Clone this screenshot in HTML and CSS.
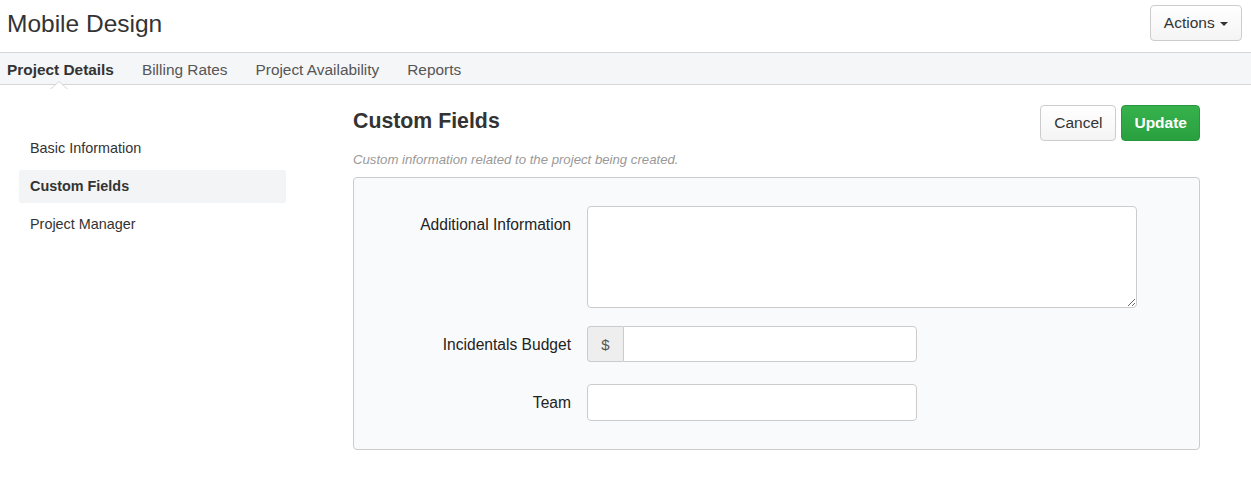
FILE: index.html
```html
<!DOCTYPE html>
<html lang="en">
<head>
    <meta charset="UTF-8">
    <meta name="viewport" content="width=device-width, initial-scale=1.0">
    <title>Mobile Design</title>
    <link rel="stylesheet" href="styles.css">
</head>
<body>
    <header class="page-header">
        <h1>Mobile Design</h1>
        <button class="btn btn-actions">Actions <span class="caret"></span></button>
    </header>

    <nav class="tabs">
        <a class="tab active" href="#">Project Details</a>
        <a class="tab" href="#">Billing Rates</a>
        <a class="tab" href="#">Project Availability</a>
        <a class="tab" href="#">Reports</a>
    </nav>

    <div class="content">
        <ul class="side-nav">
            <li><a href="#">Basic Information</a></li>
            <li class="active"><a href="#">Custom Fields</a></li>
            <li><a href="#">Project Manager</a></li>
        </ul>

        <main class="main">
            <div class="section-head">
                <h2>Custom Fields</h2>
                <div class="section-actions">
                    <button class="btn">Cancel</button>
                    <button class="btn btn-success">Update</button>
                </div>
            </div>
            <p class="help">Custom information related to the project being created.</p>

            <form class="panel">
                <label for="info">Additional Information</label>
                <textarea id="info"></textarea>

                <label for="budget">Incidentals Budget</label>
                <div class="input-group">
                    <span class="addon">$</span>
                    <input id="budget" type="text">
                </div>

                <label for="team" class="spaced">Team</label>
                <input id="team" class="short spaced" type="text">
            </form>
        </main>
    </div>
</body>
</html>
```

FILE: styles.css
```css
body {
    margin: 0;
    font-family: "Liberation Sans", Arial, sans-serif;
    font-size: 14px;
    color: #333;
    background-color: #fff;
}

a {
    color: inherit;
    text-decoration: none;
}

.page-header {
    display: flex;
    justify-content: space-between;
    align-items: center;
    height: 52px;
    padding: 0 9px 0 7px;
    box-sizing: border-box;
}

.page-header h1 {
    margin: 0 0 4px;
    font-size: 24.5px;
    font-weight: normal;
    color: #333;
}

.btn {
    font-family: inherit;
    font-size: 15.5px;
    color: #333;
    height: 36px;
    padding: 0 13px;
    border: 1px solid #ccc;
    border-radius: 4px;
    background: linear-gradient(#fff, #f4f4f4);
    cursor: pointer;
}

.btn-actions {
    height: 36px;
    margin-bottom: 6px;
}

.caret {
    display: inline-block;
    width: 0;
    height: 0;
    margin-left: 1px;
    vertical-align: middle;
    border-top: 4px solid #333;
    border-left: 4px solid transparent;
    border-right: 4px solid transparent;
}

.btn-success {
    color: #fff;
    font-weight: bold;
    padding: 0 12px;
    background: linear-gradient(#36b24c, #29a03f);
    border-color: #27963c;
}

.tabs {
    display: flex;
    gap: 28px;
    height: 31px;
    padding-left: 7px;
    align-items: center;
    background-color: #f5f6f8;
    border-top: 1px solid #d6d6d6;
    border-bottom: 1px solid #d6d6d6;
}

.tab {
    position: relative;
    top: 1px;
    font-size: 15.4px;
    color: #555;
}

.tab.active {
    font-weight: bold;
    color: #333;
}

/* little notch under the current tab */
.tab.active::before,
.tab.active::after {
    content: "";
    position: absolute;
    left: 50%;
    width: 0;
    height: 0;
    border-left: 9px solid transparent;
    border-right: 9px solid transparent;
}

.tab.active::before {
    bottom: -10px;
    margin-left: -10px;
    border-bottom: 8px solid #d6d6d6;
}

.tab.active::after {
    bottom: -11px;
    margin-left: -10px;
    border-bottom: 8px solid #fff;
}

.content {
    display: flex;
    padding-top: 20px;
}

.side-nav {
    list-style: none;
    margin: 27px 0 0 19px;
    padding: 0;
    width: 267px;
    flex-shrink: 0;
}

.side-nav li {
    margin-bottom: 5px;
    border-radius: 2px;
}

.side-nav a {
    display: block;
    height: 33px;
    line-height: 33px;
    padding-left: 11px;
    font-size: 14.4px;
    color: #333;
}

.side-nav li.active {
    background-color: #f3f4f6;
}

.side-nav li.active a {
    font-weight: bold;
}

.main {
    margin-left: 67px;
    width: 847px;
}

.section-head {
    display: flex;
    justify-content: space-between;
    align-items: flex-start;
}

.section-head h2 {
    margin: 4px 0 0;
    font-size: 21.3px;
    font-weight: bold;
}

.section-actions {
    display: flex;
    gap: 5px;
}

.help {
    margin: 11px 0 10px;
    font-size: 13.2px;
    font-style: italic;
    color: #999;
}

.panel {
    display: grid;
    grid-template-columns: 217px 550px;
    column-gap: 16px;
    row-gap: 18px;
    align-items: start;
    padding: 28px 0 28px;
    background-color: #f9fafb;
    border: 1px solid #ccc;
    border-radius: 4px;
}

.panel label {
    position: relative;
    top: 1px;
    text-align: right;
    font-size: 15.6px;
    color: #222;
    line-height: 36px;
}

.panel label[for="info"] {
    line-height: 20px;
    padding-top: 8px;
}

.panel .spaced {
    margin-top: 4px;
}

textarea,
input {
    display: block;
    font-family: inherit;
    font-size: 14px;
    box-sizing: border-box;
    border: 1px solid #ccc;
    border-radius: 4px;
    background-color: #fff;
}

textarea {
    height: 102px;
    width: 550px;
}

input.short {
    width: 330px;
    height: 37px;
}

.input-group {
    display: flex;
    width: 330px;
    height: 36px;
}

.addon {
    width: 36px;
    box-sizing: border-box;
    display: flex;
    align-items: center;
    justify-content: center;
    font-size: 15px;
    color: #555;
    background-color: #eee;
    border: 1px solid #ccc;
    border-right: none;
    border-radius: 4px 0 0 4px;
}

.input-group input {
    flex: 1;
    border-radius: 0 4px 4px 0;
}
```
